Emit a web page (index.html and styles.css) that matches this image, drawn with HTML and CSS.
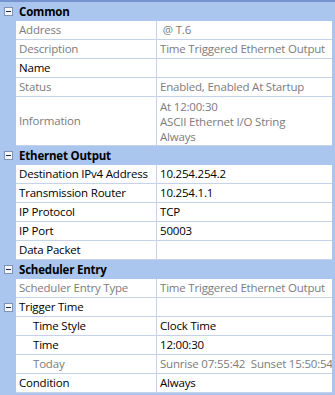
FILE: index.html
```html
<!DOCTYPE html>
<html lang="en">
<head>
  <meta charset="UTF-8" />
  <title>Properties</title>
  <link rel="stylesheet" href="styles.css">
</head>
<body>
  <div class="grid">

    <div class="cat">
      <span class="tog"><svg width="9" height="9" viewBox="0 0 9 9"><rect x="0.5" y="0.5" width="8" height="8" fill="#f4f6fa" stroke="#7f93b5"/><path d="M2 4.5h5" stroke="#1e2d4a"/></svg></span>
      <span class="cat-name">Common</span>
    </div>
    <div class="row ro"><div class="gut"></div><div class="name">Address</div><div class="val">&nbsp;@ T.6</div></div>
    <div class="row ro"><div class="gut"></div><div class="name">Description</div><div class="val">Time Triggered Ethernet Output</div></div>
    <div class="row"><div class="gut"></div><div class="name">Name</div><div class="val"></div></div>
    <div class="row ro"><div class="gut"></div><div class="name">Status</div><div class="val">Enabled, Enabled At Startup</div></div>
    <div class="row ro tall"><div class="gut"></div><div class="name">Information</div><div class="val multi">At 12:00:30<br>ASCII Ethernet I/O String<br>Always</div></div>

    <div class="cat">
      <span class="tog"><svg width="9" height="9" viewBox="0 0 9 9"><rect x="0.5" y="0.5" width="8" height="8" fill="#f4f6fa" stroke="#7f93b5"/><path d="M2 4.5h5" stroke="#1e2d4a"/></svg></span>
      <span class="cat-name">Ethernet Output</span>
    </div>
    <div class="row"><div class="gut"></div><div class="name">Destination IPv4 Address</div><div class="val">10.254.254.2</div></div>
    <div class="row"><div class="gut"></div><div class="name">Transmission Router</div><div class="val">10.254.1.1</div></div>
    <div class="row"><div class="gut"></div><div class="name">IP Protocol</div><div class="val">TCP</div></div>
    <div class="row"><div class="gut"></div><div class="name">IP Port</div><div class="val">50003</div></div>
    <div class="row"><div class="gut"></div><div class="name">Data Packet</div><div class="val"></div></div>

    <div class="cat">
      <span class="tog"><svg width="9" height="9" viewBox="0 0 9 9"><rect x="0.5" y="0.5" width="8" height="8" fill="#f4f6fa" stroke="#7f93b5"/><path d="M2 4.5h5" stroke="#1e2d4a"/></svg></span>
      <span class="cat-name">Scheduler Entry</span>
    </div>
    <div class="row ro"><div class="gut"></div><div class="name">Scheduler Entry Type</div><div class="val">Time Triggered Ethernet Output</div></div>
    <div class="row">
      <div class="gut"><svg width="9" height="9" viewBox="0 0 9 9"><rect x="0.5" y="0.5" width="8" height="8" fill="#f4f6fa" stroke="#7f93b5"/><path d="M2 4.5h5" stroke="#1e2d4a"/></svg></div>
      <div class="name">Trigger Time</div><div class="val"></div>
    </div>
    <div class="row sub"><div class="gut"></div><div class="name">Time Style</div><div class="val">Clock Time</div></div>
    <div class="row sub"><div class="gut"></div><div class="name">Time</div><div class="val">12:00:30</div></div>
    <div class="row sub ro"><div class="gut"></div><div class="name">Today</div><div class="val">Sunrise 07:55:42&nbsp; Sunset 15:50:54</div></div>
    <div class="row"><div class="gut"></div><div class="name">Condition</div><div class="val">Always</div></div>

  </div>
</body>
</html>
```

FILE: styles.css
```css
* {
  box-sizing: border-box;
  margin: 0;
  padding: 0;
}

body {
  background: #abc6ee;
  font-family: 'Open Sans', 'Noto Sans', sans-serif;
  font-size: 11.5px;
  letter-spacing: -0.2px;
  color: #000;
}

.grid {
  width: 335px;
  height: 395px;
  overflow: hidden;
  background: #abc6ee;
  border-top: 2px solid #7493cf;
  padding-right: 3px;
}

.cat {
  display: flex;
  align-items: center;
  height: 19px;
}

.tog {
  width: 16px;
  display: flex;
  justify-content: center;
  padding-left: 1px;
}

.tog svg,
.gut svg {
  display: block;
}

.cat-name {
  font-weight: bold;
  padding-left: 3px;
  line-height: 18px;
}

.row {
  display: flex;
  height: 19px;
  line-height: 18px;
}

.row.tall {
  height: 49px;
}

.gut {
  width: 16px;
  flex: 0 0 16px;
  background: #abc6ee;
  display: flex;
  align-items: center;
  justify-content: center;
  padding-left: 1px;
}

.name {
  width: 141px;
  flex: 0 0 141px;
  background: #fff;
  border-right: 1px solid #c5d3ea;
  border-bottom: 1px solid #c5d3ea;
  padding-left: 3px;
  white-space: nowrap;
  overflow: hidden;
  display: flex;
  align-items: center;
}

.val {
  flex: 1;
  background: #fff;
  border-bottom: 1px solid #c5d3ea;
  padding-left: 3px;
  white-space: nowrap;
  overflow: hidden;
}

.val.multi {
  line-height: 15px;
  padding-top: 2px;
}

.sub .name {
  padding-left: 17px;
}

.ro .name,
.ro .val {
  color: #7c7c7c;
}
```
